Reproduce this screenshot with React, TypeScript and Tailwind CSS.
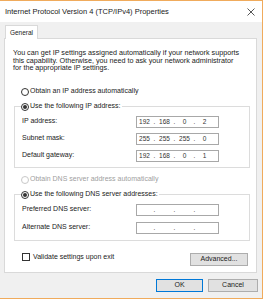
import React from "react";

const font = { fontFamily: '"Liberation Sans", Arial, sans-serif' };

function Radio({ checked, disabled }: { checked?: boolean; disabled?: boolean }) {
  return (
    <span
      className={`flex h-[8px] w-[8px] shrink-0 items-center justify-center rounded-full border bg-white ${
        disabled ? "border-[#c8c8c8]" : "border-[#333333]"
      }`}
    >
      {checked && <span className="h-[4px] w-[4px] rounded-full bg-[#333333]" />}
    </span>
  );
}

function IpBox({ parts }: { parts: string[] }) {
  return (
    <div className="flex h-[12px] w-[83px] items-center border border-[#a8a8a8] bg-white text-[6.5px] text-[#333]">
      {parts.map((p, i) => (
        <React.Fragment key={i}>
          <span className="w-[15px] text-center">{p}</span>
          {i < 3 && <span className="w-[5px] text-center">.</span>}
        </React.Fragment>
      ))}
    </div>
  );
}

function Row({ label, parts }: { label: string; parts: string[] }) {
  return (
    <div className="flex h-[12px] items-center pl-[7px]">
      <span className="w-[114px] text-[7px] text-[#222]">{label}</span>
      <IpBox parts={parts} />
    </div>
  );
}

function Button({ children, primary, className = "" }: { children: React.ReactNode; primary?: boolean; className?: string }) {
  return (
    <div
      className={`flex items-center justify-center border bg-[#e1e1e1] text-[7px] text-[#222] ${
        primary ? "border-[#0078d7]" : "border-[#adadad]"
      } ${className}`}
    >
      {children}
    </div>
  );
}

export default function App() {
  return (
    <div className="h-[300px] w-[264px] bg-white" style={font}>
      <div className="flex h-[299px] w-[263px] flex-col border-r border-b border-t border-[#f0ab5c] bg-[#f0f0f0]">
        {/* Title bar */}
        <div className="flex h-[21px] shrink-0 items-center justify-between bg-white pl-[5px] pr-[7px]">
          <span className="text-[7.5px] text-[#1a1a1a]">Internet Protocol Version 4 (TCP/IPv4) Properties</span>
          <svg width="8" height="8" viewBox="0 0 8 8">
            <path d="M0.5 0.5 L7.5 7.5 M7.5 0.5 L0.5 7.5" stroke="#444" strokeWidth="0.9" />
          </svg>
        </div>

        {/* Tab */}
        <div className="mt-[3px] flex pl-[5px]">
          <div className="relative -mb-px flex h-[14px] w-[33px] items-center justify-center border border-b-0 border-[#d9d9d9] bg-white text-[6.5px] text-[#222]">
            General
          </div>
        </div>

        {/* Panel */}
        <div className="ml-[4px] flex h-[235px] w-[253px] flex-col border border-[#d9d9d9] bg-white text-[7px] text-[#222]">
          <p className="ml-[8px] mt-[10px] w-[230px] text-[7.2px] leading-[7.5px]">
            You can get IP settings assigned automatically if your network supports this capability. Otherwise, you need to ask your network administrator for the appropriate IP settings.
          </p>

          <div className="ml-[16px] mt-[16px] flex h-[8px] items-center gap-[1px]">
            <Radio />
            <span>Obtain an IP address automatically</span>
          </div>

          <fieldset className="ml-[9px] mt-[7px] w-[236px] border border-[#dcdcdc] pb-[5px] pl-[6px]">
            <legend className="flex h-[8px] items-center gap-[1px] bg-white pr-[1px]">
              <Radio checked />
              <span>Use the following IP address:</span>
            </legend>
            <div className="-ml-[6px] mt-[5px] flex flex-col gap-[5px]">
              <Row label="IP address:" parts={["192", "168", "0", "2"]} />
              <Row label="Subnet mask:" parts={["255", "255", "255", "0"]} />
              <Row label="Default gateway:" parts={["192", "168", "0", "1"]} />
            </div>
          </fieldset>

          <div className="ml-[16px] mt-[8px] flex h-[8px] items-center gap-[1px] text-[#a0a0a0]">
            <Radio disabled />
            <span>Obtain DNS server address automatically</span>
          </div>

          <fieldset className="ml-[9px] mt-[7px] w-[236px] border border-[#dcdcdc] pb-[6px] pl-[6px]">
            <legend className="flex h-[8px] items-center gap-[1px] bg-white pr-[1px]">
              <Radio checked />
              <span>Use the following DNS server addresses:</span>
            </legend>
            <div className="-ml-[6px] mt-[5px] flex flex-col gap-[6px]">
              <Row label="Preferred DNS server:" parts={["", "", "", ""]} />
              <Row label="Alternate DNS server:" parts={["", "", "", ""]} />
            </div>
          </fieldset>

          <div className="ml-[17px] mr-[8px] mt-[11px] flex items-start justify-between">
            <div className="flex items-center gap-[3px]">
              <span className="h-[8px] w-[8px] border border-[#333] bg-white" />
              <span>Validate settings upon exit</span>
            </div>
            <Button className="mt-[1px] h-[13px] w-[58px]">Advanced...</Button>
          </div>
        </div>

        {/* Footer buttons */}
        <div className="mt-[6px] flex gap-[5px] pl-[156px]">
          <Button primary className="h-[13px] w-[47px]">OK</Button>
          <Button className="h-[13px] w-[50px]">Cancel</Button>
        </div>
      </div>
    </div>
  );
}
